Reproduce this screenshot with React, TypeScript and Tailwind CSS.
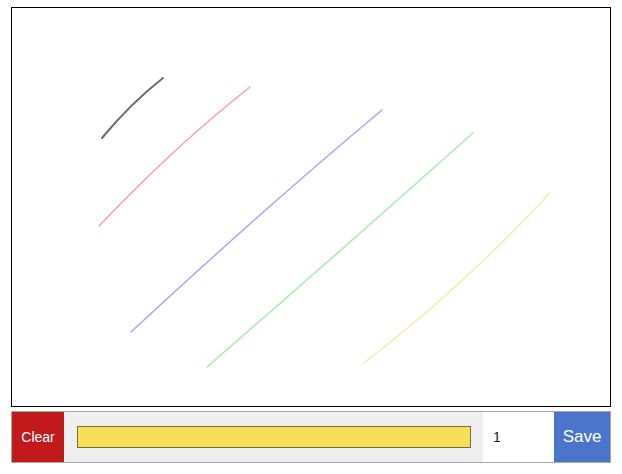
const strokes = [
  { d: "M90 130 Q118 96 151 70", color: "#6b6b6b", w: 2 },
  { d: "M87 218 Q163 138 238 79", color: "#f3a3a3", w: 1.5 },
  { d: "M119 324 Q255 198 370 102", color: "#aaa9ec", w: 1.5 },
  { d: "M195 359 Q332 240 461 125", color: "#a6eea6", w: 1.5 },
  { d: "M352 355 Q452 278 538 185", color: "#f6eca4", w: 1.5 },
];

export default function App() {
  return (
    <div className="pl-[11px] pt-[7px] font-['Liberation_Sans',Arial,sans-serif]">
      <div className="w-[600px] h-[400px] border border-black bg-white">
        <svg width="598" height="398" viewBox="0 0 598 398">
          {strokes.map((s, i) => (
            <path
              key={i}
              d={s.d}
              fill="none"
              stroke={s.color}
              strokeWidth={s.w}
              strokeLinecap="round"
            />
          ))}
        </svg>
      </div>
      <div className="mt-[4px] flex h-[52px] w-[600px] border border-[#a9a9a9]">
        <button className="flex w-[52px] items-center justify-center bg-[#c2191c] text-[14px] text-white">
          Clear
        </button>
        <div className="flex flex-1 items-center bg-[#efefef] pl-[13px] pr-[12px]">
          <div className="h-[22px] w-full border border-[#7d6e37] bg-[#f6e05a]" />
        </div>
        <div className="flex w-[71px] items-center bg-white pl-[10px] text-[14px] text-[#222]">
          1
        </div>
        <button className="flex w-[56px] items-center justify-center bg-[#4b74cc] text-[17px] text-white">
          Save
        </button>
      </div>
    </div>
  );
}
